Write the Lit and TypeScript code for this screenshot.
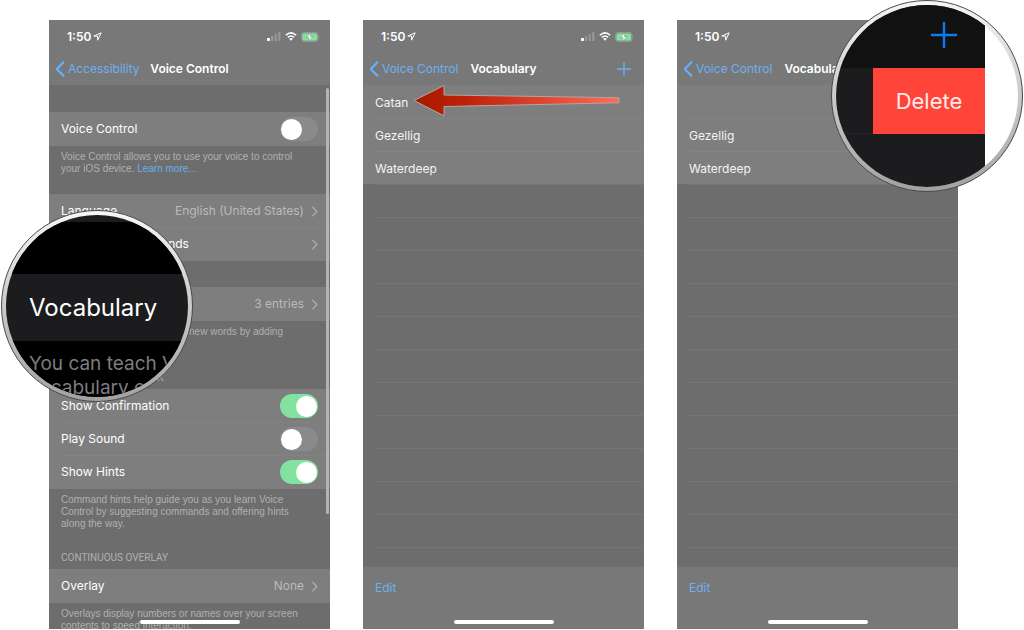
import { LitElement, html, svg, css, nothing } from "lit";
import { customElement, property } from "lit/decorators.js";

const shared = css`
  :host {
    display: block;
    box-sizing: border-box;
    font-family: Inter, "Liberation Sans", sans-serif;
  }
  * {
    box-sizing: border-box;
  }
  a {
    color: inherit;
    text-decoration: none;
  }
  button {
    border: 0;
    padding: 0;
    background: none;
    font: inherit;
    color: inherit;
  }
  svg {
    display: block;
  }
`;

const chevron = html`<svg width="6" height="11" viewBox="0 0 6 11" aria-hidden="true">
  <path d="M0.7 1.2 L4.8 5.5 L0.7 9.8" fill="none" stroke="#b0b0b2" stroke-width="1.2" stroke-linecap="round" stroke-linejoin="round" />
</svg>`;

const plus = (size: number, color: string, width: number) => html`<svg
  width=${size}
  height=${size}
  viewBox="0 0 26 26"
  aria-hidden="true"
>
  ${svg`<path d="M13 0.5 V25.5 M0.5 13 H25.5" fill="none" stroke=${color} stroke-width=${width} stroke-linecap="round" />`}
</svg>`;

@customElement("phone-header")
class PhoneHeader extends LitElement {
  @property() back = "";
  @property() heading = "";
  @property({ type: Boolean }) add = false;

  static styles = [
    shared,
    css`
      :host {
        background: #787878;
        padding: 5px 12px 0 6px;
        height: 65px;
        flex: none;
      }
      .status {
        display: flex;
        align-items: center;
        justify-content: space-between;
        height: 23px;
        padding: 0 0 0 12px;
        margin-right: -2px;
      }
      .time {
        display: flex;
        align-items: center;
        gap: 2px;
        color: #fff;
        font-size: 12px;
        font-weight: 600;
        line-height: 16px;
      }
      .icons {
        display: flex;
        align-items: center;
        gap: 4px;
      }
      .nav {
        display: grid;
        grid-template-columns: 1fr auto 1fr;
        align-items: center;
        height: 20px;
        margin: 11px -6px 0 0;
      }
      .back {
        display: flex;
        align-items: center;
        gap: 3px;
        color: #6bb0f3;
        font-size: 12px;
        line-height: 16px;
        white-space: nowrap;
      }
      h1 {
        margin: 0;
        color: #fff;
        font-size: 12px;
        font-weight: 600;
        line-height: 16px;
      }
      .add {
        justify-self: end;
        margin-right: 7px;
      }
    `,
  ];

  render() {
    return html`
      <div class="status">
        <span class="time">
          1:50
          <svg width="9" height="9" viewBox="0 0 9 9" aria-hidden="true">
            <path d="M8.2 0.8 L0.8 4.1 H4.6 V8.2 Z" fill="none" stroke="#fff" stroke-width="1" stroke-linejoin="round" />
          </svg>
        </span>
        <span class="icons">
          <svg width="14" height="9" viewBox="0 0 14 9" aria-hidden="true">
            <rect x="0" y="6" width="3" height="3" rx="0.8" fill="#fff" />
            <rect x="4" y="4" width="2.2" height="5" rx="0.6" fill="#979797" />
            <rect x="7.6" y="2" width="2.2" height="7" rx="0.6" fill="#979797" />
            <rect x="11.2" y="0" width="2.2" height="9" rx="0.6" fill="#979797" />
          </svg>
          <svg width="12" height="9" viewBox="0 0 12 9" aria-hidden="true">
            <path d="M0.8 3.3 Q6 -1.5 11.2 3.3" fill="none" stroke="#fff" stroke-width="1.5" />
            <path d="M2.8 5.4 Q6 2.6 9.2 5.4" fill="none" stroke="#fff" stroke-width="1.4" />
            <path d="M4.1 6.8 Q6 5.3 7.9 6.8 L6 8.8 Z" fill="#fff" />
          </svg>
          <svg width="19" height="10" viewBox="0 0 19 10" aria-hidden="true">
            <rect x="0.5" y="0.5" width="16.5" height="9" rx="2.6" fill="#8a8a8a" stroke="#989898" />
            <rect x="1.5" y="1.5" width="14.5" height="7" rx="1.6" fill="#7fe59d" />
            <path d="M17.8 3.4 Q18.8 5 17.8 6.6 Z" fill="#a6a6a6" />
            <path d="M10.2 0.6 L5 5.6 H8.1 L7 9.4 L12.2 4.4 H9.1 Z" fill="#fff" stroke="#787878" stroke-width="0.5" />
          </svg>
        </span>
      </div>
      <div class="nav">
        <a class="back" href="#back">
          <svg width="10" height="16" viewBox="0 0 10 16" aria-hidden="true">
            <path d="M8.4 1.2 L1.8 8 L8.4 14.8" fill="none" stroke="#63b3ff" stroke-width="2" stroke-linecap="round" stroke-linejoin="round" />
          </svg>
          ${this.back}
        </a>
        <h1>${this.heading}</h1>
        ${this.add
          ? html`<button class="add" aria-label="Add">${plus(14, "#6bb0f3", 2.4)}</button>`
          : nothing}
      </div>
    `;
  }
}

@customElement("settings-screen")
class SettingsScreen extends LitElement {
  static styles = [
    shared,
    css`
      :host {
        position: relative;
        display: flex;
        flex-direction: column;
        overflow: hidden;
        background: #6d6d6d;
      }
      .body {
        flex: 1;
        min-height: 0;
        padding-top: 27px;
      }
      .group {
        background: #7e7e7e;
        padding: 0 0 1px 12px;
      }
      .gap {
        margin-bottom: 26px;
      }
      .row {
        display: flex;
        align-items: center;
        gap: 8px;
        height: 33px;
        padding: 1px 12px 0 0;
        color: #fff;
        font-size: 12px;
        line-height: 16px;
      }
      .row + .row {
        padding-top: 0;
        border-top: 1px solid #838383;
      }
      .name {
        flex: 1;
      }
      .value {
        color: #bababc;
      }
      .note,
      h2 {
        margin: 0;
        padding: 5px 12px 0;
        color: #b0b0b2;
        font-family: "Liberation Sans", sans-serif;
        font-size: 10px;
        font-weight: 400;
        line-height: 12px;
      }
      .note a {
        color: #69aeef;
      }
      .lone {
        padding-bottom: 19px;
      }
      h2 {
        padding: 22px 12px 5px;
        font-family: Roboto, sans-serif;
      }
      .switch {
        appearance: none;
        display: flex;
        align-items: center;
        width: 38px;
        height: 24px;
        margin: 0;
        padding: 0 1px;
        border-radius: 12px;
        background: #8a8a8d;
      }
      .switch::before {
        content: "";
        width: 21px;
        height: 21px;
        border-radius: 50%;
        background: #fff;
      }
      .switch:checked {
        justify-content: flex-end;
        background: #82e3a0;
      }
      .scroll {
        position: absolute;
        top: 68px;
        right: 1px;
        width: 3px;
        height: 70%;
        border-radius: 2px;
        background: #b4b4b4;
      }
      .home {
        position: absolute;
        left: 50%;
        bottom: 5px;
        width: 100px;
        height: 4px;
        margin-left: -50px;
        border-radius: 2px;
        background: #fff;
      }
    `,
  ];

  private link(name: string, value = "") {
    return html`<a class="row" href="#open">
      <span class="name">${name}</span><span class="value">${value}</span>${chevron}
    </a>`;
  }

  private toggle(name: string, on: boolean) {
    return html`<label class="row">
      <span class="name">${name}</span><input class="switch" type="checkbox" .checked=${on} />
    </label>`;
  }

  render() {
    return html`
      <phone-header back="Accessibility" heading="Voice Control"></phone-header>
      <div class="body">
        <div class="group">${this.toggle("Voice Control", false)}</div>
        <p class="note lone">
          Voice Control allows you to use your voice to control<br />your iOS device.
          <a href="#learn">Learn more...</a>
        </p>
        <div class="group gap">
          ${this.link("Language", "English (United States)")} ${this.link("Customize Commands")}
        </div>
        <div class="group">${this.link("Vocabulary", "3 entries")}</div>
        <p class="note">You can teach Voice Control new words by adding<br />vocabulary entries.</p>
        <h2>COMMAND FEEDBACK</h2>
        <div class="group">
          ${this.toggle("Show Confirmation", true)} ${this.toggle("Play Sound", false)}
          ${this.toggle("Show Hints", true)}
        </div>
        <p class="note">
          Command hints help guide you as you learn Voice<br />Control by suggesting commands and
          offering hints<br />along the way.
        </p>
        <h2>CONTINUOUS OVERLAY</h2>
        <div class="group">${this.link("Overlay", "None")}</div>
        <p class="note">
          Overlays display numbers or names over your screen<br />contents to speed interaction.
        </p>
      </div>
      <div class="scroll"></div>
      <div class="home"></div>
    `;
  }
}

@customElement("vocabulary-screen")
class VocabularyScreen extends LitElement {
  @property({ attribute: false }) words: string[] = [];

  static styles = [
    shared,
    css`
      :host {
        display: flex;
        flex-direction: column;
        overflow: hidden;
        background: #6d6d6d;
      }
      ul {
        margin: 0;
        padding: 0 0 0 12px;
        list-style: none;
      }
      .words {
        background: #7e7e7e;
      }
      li {
        height: 33px;
        color: #f4f4f4;
        font-size: 12px;
        line-height: 35px;
      }
      .words li + li {
        border-top: 1px solid #838383;
        line-height: 33px;
      }
      .blank {
        flex: 1;
        min-height: 0;
        overflow: hidden;
      }
      .blank li {
        border-top: 1px solid #757575;
      }
      footer {
        display: flex;
        flex-direction: column;
        justify-content: space-between;
        align-items: center;
        height: 62px;
        padding: 12px 12px 5px;
        background: #787878;
      }
      .edit {
        align-self: flex-start;
        color: #6bb0f3;
        font-size: 12px;
        line-height: 18px;
      }
      .home {
        width: 100px;
        height: 4px;
        border-radius: 2px;
        background: #fff;
      }
    `,
  ];

  render() {
    return html`
      <phone-header back="Voice Control" heading="Vocabulary" add></phone-header>
      <ul class="words">
        ${this.words.map((word) => html`<li>${word}</li>`)}
      </ul>
      <ul class="blank" aria-hidden="true">
        ${Array.from({ length: 12 }, () => html`<li></li>`)}
      </ul>
      <footer>
        <button class="edit">Edit</button>
        <div class="home"></div>
      </footer>
    `;
  }
}

@customElement("magnifier-lens")
class MagnifierLens extends LitElement {
  static styles = [
    shared,
    css`
      :host {
        width: 192px;
        height: 192px;
        padding: 4px;
        border: 1px solid #4a4a4a;
        border-radius: 50%;
        background: linear-gradient(#f6f6f6, #d2d2d2 40%, #a2a2a2);
      }
      .glass {
        height: 100%;
        overflow: hidden;
        border-radius: 50%;
      }
    `,
  ];

  render() {
    return html`<div class="glass"><slot></slot></div>`;
  }
}

@customElement("app-root")
class AppRoot extends LitElement {
  static styles = [
    shared,
    css`
      :host {
        position: relative;
        background: #fff;
        overflow: hidden;
      }
      main {
        display: grid;
        grid-template-columns: repeat(3, minmax(0, 1fr));
        grid-template-rows: minmax(0, 1fr);
        gap: 33px;
        height: 100vh;
        padding: 20px 66px 1px 49px;
      }
      .step {
        position: relative;
        display: grid;
      }
      .arrow {
        position: absolute;
        left: 50px;
        top: 63px;
      }
      .lens-entry {
        position: absolute;
        left: -48px;
        top: 190px;
      }
      .lens-delete {
        position: absolute;
        right: -65px;
        top: -20px;
      }
      .entry {
        height: 100%;
        padding-top: 7px;
        background: #1c1c1e;
      }
      .dark {
        height: 52px;
        background: #000;
      }
      .big {
        height: 67px;
        padding-left: 23px;
        color: #fff;
        font-size: 24px;
        line-height: 68px;
      }
      .about {
        height: 80px;
        padding: 11px 0 0 23px;
        background: #000;
        color: #7c7c81;
        font-size: 19px;
        line-height: 24px;
        white-space: nowrap;
      }
      .swipe {
        display: flex;
        flex-direction: column;
        height: 100%;
        margin-right: 33px;
        background: #1c1c1e;
      }
      .top {
        display: flex;
        justify-content: flex-end;
        height: 63px;
        padding: 17px 28px 0 0;
        background: #111112;
      }
      .line {
        display: flex;
        justify-content: flex-end;
        height: 66px;
        border-bottom: 1px solid #252527;
      }
      .delete {
        width: 112px;
        height: 66px;
        background: #ff443a;
        color: #ffeae8;
        font-size: 22px;
      }
      .white {
        height: 100%;
        background: #fff;
      }
    `,
  ];

  render() {
    return html`
      <main>
        <section class="step">
          <settings-screen></settings-screen>
          <magnifier-lens class="lens-entry">
            <div class="entry">
              <div class="dark"></div>
              <div class="big">Vocabulary</div>
              <div class="about">You can teach Voice<br />vocabulary entries.</div>
            </div>
          </magnifier-lens>
        </section>
        <section class="step">
          <vocabulary-screen .words=${["Catan", "Gezellig", "Waterdeep"]}></vocabulary-screen>
          <svg class="arrow" width="208" height="35" viewBox="0 0 208 35" aria-hidden="true">
            <defs>
              <linearGradient id="fade">
                <stop offset="0" stop-color="#a81800" />
                <stop offset="0.25" stop-color="#bd2108" />
                <stop offset="1" stop-color="#ff6a58" />
              </linearGradient>
            </defs>
            <path d="M1 17.5 L31 2.5 V12 L206 14.7 V19.8 L31 23.5 V32.8 Z" fill="url(#fade)" stroke="#b3a5a2" stroke-width="1" />
          </svg>
        </section>
        <section class="step">
          <vocabulary-screen .words=${["", "Gezellig", "Waterdeep"]}></vocabulary-screen>
          <magnifier-lens class="lens-delete">
            <div class="white">
              <div class="swipe">
                <div class="top">${plus(26, "#0a7cf0", 2.4)}</div>
                <div class="line"><button class="delete">Delete</button></div>
              </div>
            </div>
          </magnifier-lens>
        </section>
      </main>
    `;
  }
}
